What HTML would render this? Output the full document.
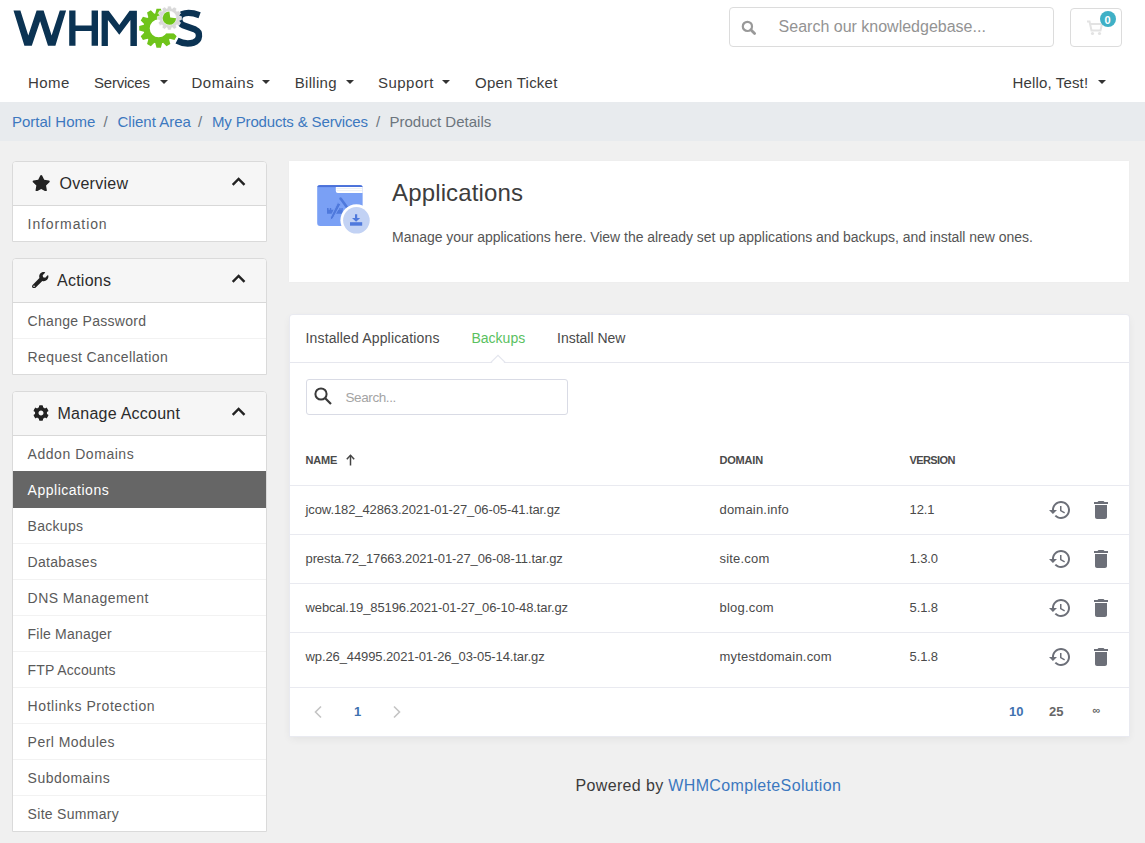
<!DOCTYPE html>
<html><head><meta charset="utf-8">
<style>
*{box-sizing:border-box;margin:0;padding:0}
html,body{width:1145px;height:843px;overflow:hidden}
body{position:relative;background:#f0f0f0;font-family:"Liberation Sans",sans-serif;color:#333}
.a{position:absolute}
.t{position:absolute;line-height:1;white-space:nowrap}
#hdr{position:absolute;left:0;top:0;width:1145px;height:102px;background:#fff}
#bc{position:absolute;left:0;top:102px;width:1145px;height:39px;background:#e8ebee}
.nav{font-size:15px;color:#3b3b3b;top:75.3px}
.caret{position:absolute;width:0;height:0;border-left:4.2px solid transparent;border-right:4.2px solid transparent;border-top:4.6px solid #333;top:80.3px}
.bcl{font-size:15px;color:#3c78bf;top:114.1px}
.panel{position:absolute;left:12px;width:255px;background:#fff;border:1px solid #dadada;border-radius:4px 4px 0 0;overflow:hidden}
.ph{position:relative;height:44px;background:#f6f6f6;border-bottom:1px solid #d8d8d8}
.ph .pt{position:absolute;left:45px;top:14.1px;font-size:16px;line-height:1;color:#2b2b2b;letter-spacing:0.25px}
.ph .ic{position:absolute;left:20px;top:13px}
.chev{position:absolute;left:217px;top:14px}
.li{position:relative;height:36px;border-top:1px solid #f2f2f2;font-size:14px;color:#5a5a5a;letter-spacing:0.4px}
.ph+.li{border-top:0;height:35px}
.li span{position:absolute;left:14.6px;top:11px;line-height:1}
.li.act{background:#666;color:#fff;border-top-color:#666;box-shadow:0 1px 0 #666;z-index:1}
.card{position:absolute;background:#fff}
.th{top:455.3px;font-size:11px;font-weight:bold;color:#4a4a4a;letter-spacing:-0.2px}
.td{font-size:13px;color:#4a4a4a;letter-spacing:-0.1px;margin-top:1px}
.rowline{left:290px;width:839px;height:1px;background:#e9eaf0}
</style></head><body>

<div id="hdr">
  <!-- logo -->
  <svg class="a" style="left:0;top:0" width="220" height="56" viewBox="0 0 220 56">
    <g fill="#0b3353">
      <path d="M13.5 10.4H20.4L28.3 35.6L36.6 10.4H43.6L51.6 35.6L59.8 10.4H66.1L55.4 45.8H48L40.1 21.2L31.8 45.8H24.4Z"/>
      <path d="M69.2 10.4H75.5V25.4H91.6V10.4H98V45.8H91.6V31.1H75.5V45.8H69.2Z"/>
      <path d="M101.6 45.9V10.7H108.7L119.3 25L129.6 10.7H136.9V45.9H130.4V20.1L119.3 34.7L107.9 20.1V45.9Z"/>
    </g>
    <path fill="#6fc41a" fill-rule="evenodd" d="M173.50 24.83 L178.18 26.10 L178.18 30.50 L173.50 31.77 L173.44 32.00 L173.38 32.23 L173.32 32.47 L173.25 32.70 L176.66 36.14 L174.47 39.94 L169.78 38.70 L169.62 38.88 L169.45 39.05 L169.28 39.22 L169.10 39.38 L170.34 44.07 L166.54 46.26 L163.10 42.85 L162.87 42.92 L162.63 42.98 L162.40 43.04 L162.17 43.10 L160.90 47.78 L156.50 47.78 L155.23 43.10 L155.00 43.04 L154.77 42.98 L154.53 42.92 L154.30 42.85 L150.86 46.26 L147.06 44.07 L148.30 39.38 L148.12 39.22 L147.95 39.05 L147.78 38.88 L147.62 38.70 L142.93 39.94 L140.74 36.14 L144.15 32.70 L144.08 32.47 L144.02 32.23 L143.96 32.00 L143.90 31.77 L139.22 30.50 L139.22 26.10 L143.90 24.83 L143.96 24.60 L144.02 24.37 L144.08 24.13 L144.15 23.90 L140.74 20.46 L142.93 16.66 L147.62 17.90 L147.78 17.72 L147.95 17.55 L148.12 17.38 L148.30 17.22 L147.06 12.53 L150.86 10.34 L154.30 13.75 L154.53 13.68 L154.77 13.62 L155.00 13.56 L155.23 13.50 L156.50 8.82 L160.90 8.82 L162.17 13.50 L162.40 13.56 L162.63 13.62 L162.87 13.68 L163.10 13.75 L166.54 10.34 L170.34 12.53 L169.10 17.22 L169.28 17.38 L169.45 17.55 L169.62 17.72 L169.78 17.90 L174.47 16.66 L176.66 20.46 L173.25 23.90 L173.32 24.13 L173.38 24.37 L173.44 24.60ZM149.70 28.30A9.0 9.0 0 1 0 167.70 28.30A9.0 9.0 0 1 0 149.70 28.30Z"/>
    <path fill="#fff" d="M163 0H190V33.4H163Z"/>
    <path d="M199.6 15.2C193 12.8 186 12.4 182.3 14.2C177.8 16.5 178.3 23 183.3 25.3L195.2 29.6C200.8 32 200.2 40.6 193.6 42.6C188 44.2 181.5 43 177 40.6" fill="none" stroke="#0b3353" stroke-width="6.4"/>
    <path fill="#d9d9d9" fill-rule="evenodd" stroke="#fff" stroke-width="0.6" d="M179.03 15.82 L181.41 16.60 L181.41 19.60 L179.03 20.38 L179.00 20.52 L178.96 20.66 L178.92 20.80 L178.88 20.94 L180.55 22.81 L179.05 25.40 L176.60 24.89 L176.50 25.00 L176.40 25.10 L176.30 25.20 L176.19 25.30 L176.70 27.75 L174.11 29.25 L172.24 27.58 L172.10 27.62 L171.96 27.66 L171.82 27.70 L171.68 27.73 L170.90 30.11 L167.90 30.11 L167.12 27.73 L166.98 27.70 L166.84 27.66 L166.70 27.62 L166.56 27.58 L164.69 29.25 L162.10 27.75 L162.61 25.30 L162.50 25.20 L162.40 25.10 L162.30 25.00 L162.20 24.89 L159.75 25.40 L158.25 22.81 L159.92 20.94 L159.88 20.80 L159.84 20.66 L159.80 20.52 L159.77 20.38 L157.39 19.60 L157.39 16.60 L159.77 15.82 L159.80 15.68 L159.84 15.54 L159.88 15.40 L159.92 15.26 L158.25 13.39 L159.75 10.80 L162.20 11.31 L162.30 11.20 L162.40 11.10 L162.50 11.00 L162.61 10.90 L162.10 8.45 L164.69 6.95 L166.56 8.62 L166.70 8.58 L166.84 8.54 L166.98 8.50 L167.12 8.47 L167.90 6.09 L170.90 6.09 L171.68 8.47 L171.82 8.50 L171.96 8.54 L172.10 8.58 L172.24 8.62 L174.11 6.95 L176.70 8.45 L176.19 10.90 L176.30 11.00 L176.40 11.10 L176.50 11.20 L176.60 11.31 L179.05 10.80 L180.55 13.39 L178.88 15.26 L178.92 15.40 L178.96 15.54 L179.00 15.68ZM162.60 18.10A6.8 6.8 0 1 0 176.20 18.10A6.8 6.8 0 1 0 162.60 18.10Z"/>
    <path fill="#6fc41a" d="M170.2 17.4L169.4 11.4A6.7 6.7 0 1 0 176.1 18.3Z"/>
    </svg>

  <!-- search -->
  <div class="a" style="left:729px;top:7px;width:325px;height:40px;border:1px solid #dcdcdc;border-radius:4px;background:#fff"></div>
  <svg class="a" style="left:741px;top:20px" width="16" height="16" viewBox="0 0 16 16"><circle cx="6.4" cy="6.4" r="4.6" fill="none" stroke="#999" stroke-width="2.2"/><path d="M9.8 9.8L13.6 13.6" stroke="#999" stroke-width="2.8" stroke-linecap="round"/></svg>
  <div class="t" style="left:778.6px;top:19.4px;font-size:16px;color:#939393">Search our knowledgebase...</div>

  <!-- cart -->
  <div class="a" style="left:1070px;top:8px;width:52px;height:39px;border:1px solid #dcdcdc;border-radius:4px;background:#fff"></div>
  <svg class="a" style="left:1086px;top:20px" width="18" height="16" viewBox="0 0 18 16"><path d="M1 1.5H3.5L5.5 10.5H14.5L16 4H4.5" fill="none" stroke="#e3e3e3" stroke-width="2"/><circle cx="6.5" cy="13.5" r="1.6" fill="#e3e3e3"/><circle cx="13.5" cy="13.5" r="1.6" fill="#e3e3e3"/></svg>
  <div class="a" style="left:1099.6px;top:11.4px;width:16px;height:16px;border-radius:50%;background:#3fb0c6"></div>
  <div class="t" style="left:1099.6px;top:14.5px;width:16px;text-align:center;font-size:11px;font-weight:bold;color:#fff">0</div>

  <!-- nav -->
  <div class="t nav" style="left:28px;letter-spacing:0.43px">Home</div>
  <div class="t nav" style="left:94px;letter-spacing:-0.23px">Services</div><div class="caret" style="left:159.8px"></div>
  <div class="t nav" style="left:191.5px;letter-spacing:0.5px">Domains</div><div class="caret" style="left:262.4px"></div>
  <div class="t nav" style="left:294.8px;letter-spacing:0.28px">Billing</div><div class="caret" style="left:346px"></div>
  <div class="t nav" style="left:378px;letter-spacing:0.47px">Support</div><div class="caret" style="left:442.3px"></div>
  <div class="t nav" style="left:475px;letter-spacing:0.23px">Open Ticket</div>
  <div class="t nav" style="left:1012.5px;letter-spacing:0.15px">Hello, Test!</div><div class="caret" style="left:1097.5px"></div>
</div>

<div id="bc"></div>
<div class="t bcl" style="left:12px">Portal Home</div>
<div class="t bcl" style="left:103.5px;color:#6c757d">/</div>
<div class="t bcl" style="left:117.5px">Client Area</div>
<div class="t bcl" style="left:198px;color:#6c757d">/</div>
<div class="t bcl" style="left:212px;letter-spacing:-0.15px">My Products &amp; Services</div>
<div class="t bcl" style="left:376px;color:#6c757d">/</div>
<div class="t bcl" style="left:389.5px;color:#6c757d">Product Details</div>

<!-- sidebar -->
<div class="panel" style="top:161px;height:81px">
  <div class="ph">
    <svg class="ic" style="left:19.2px;top:12.7px" width="18.4" height="16.36" viewBox="0 0 576 512"><path fill="#222" d="M259.3 17.8L194 150.2 47.9 171.5c-26.2 3.8-36.7 36.1-17.7 54.6l105.7 103-25 145.5c-4.5 26.3 23.2 46 46.4 33.7L288 439.6l130.7 68.7c23.2 12.2 50.9-7.4 46.4-33.7l-25-145.5 105.7-103c19-18.5 8.5-50.8-17.7-54.6L382 150.2 316.7 17.8c-11.7-23.6-45.6-23.9-57.4 0z"/></svg>
    <div class="pt" style="left:46.5px">Overview</div>
    <svg class="chev" width="18" height="12" viewBox="0 0 18 12"><path d="M2.7 8.8L8.6 2.9L14.5 8.8" fill="none" stroke="#222" stroke-width="2.4"/></svg>
  </div>
  <div class="li"><span style="letter-spacing:0.9px">Information</span></div>
</div>

<div class="panel" style="top:258px;height:117px">
  <div class="ph">
    <svg class="ic" style="left:19.3px;top:12.6px" width="16.4" height="16.4" viewBox="0 0 512 512"><path fill="#222" d="M507.73 109.1c-2.24-9.03-13.54-12.09-20.12-5.51l-74.36 74.36-67.88-11.31-11.31-67.88 74.36-74.36c6.62-6.62 3.43-17.9-5.66-20.16-47.38-11.74-99.55.91-136.58 37.93-39.64 39.64-50.55 97.1-34.05 147.2L18.74 402.76c-24.99 24.99-24.99 65.51 0 90.5 24.99 24.99 65.51 24.99 90.5 0l213.21-213.21c50.12 16.71 107.47 5.68 147.37-34.22 37.07-37.07 49.7-89.32 37.91-136.73zM64 472c-13.25 0-24-10.75-24-24 0-13.26 10.75-24 24-24s24 10.74 24 24c0 13.25-10.75 24-24 24z"/></svg>
    <div class="pt" style="left:44px">Actions</div>
    <svg class="chev" width="18" height="12" viewBox="0 0 18 12"><path d="M2.7 8.8L8.6 2.9L14.5 8.8" fill="none" stroke="#222" stroke-width="2.4"/></svg>
  </div>
  <div class="li"><span style="letter-spacing:0.29px">Change Password</span></div>
  <div class="li"><span style="letter-spacing:0.37px">Request Cancellation</span></div>
</div>

<div class="panel" style="top:391px;height:441px">
  <div class="ph">
    <svg class="ic" style="left:19.7px;top:13px" width="16" height="16" viewBox="0 0 512 512"><path fill="#222" d="M487.4 315.7l-42.6-24.6c4.3-23.2 4.3-47 0-70.2l42.6-24.6c4.9-2.8 7.1-8.6 5.5-14-11.1-35.6-30-67.8-54.7-94.6-3.8-4.1-10-5.1-14.8-2.3L380.8 110c-17.9-15.4-38.5-27.3-60.8-35.1V25.8c0-5.6-3.9-10.5-9.4-11.7-36.7-8.2-74.3-7.8-109.2 0-5.5 1.2-9.4 6.1-9.4 11.7V75c-22.2 7.9-42.8 19.8-60.8 35.1L88.7 85.5c-4.9-2.8-11-1.9-14.8 2.3-24.7 26.7-43.6 58.9-54.7 94.6-1.7 5.4.6 11.2 5.5 14L67.3 221c-4.3 23.2-4.3 47 0 70.2l-42.6 24.6c-4.9 2.8-7.1 8.6-5.5 14 11.1 35.6 30 67.8 54.7 94.6 3.8 4.1 10 5.1 14.8 2.3l42.6-24.6c17.9 15.4 38.5 27.3 60.8 35.1v49.2c0 5.6 3.9 10.5 9.4 11.7 36.7 8.2 74.3 7.8 109.2 0 5.5-1.2 9.4-6.1 9.4-11.7v-49.2c22.2-7.9 42.8-19.8 60.8-35.1l42.6 24.6c4.9 2.8 11 1.9 14.8-2.3 24.7-26.7 43.6-58.9 54.7-94.6 1.5-5.5-.7-11.3-5.6-14.1zM256 336c-44.1 0-80-35.9-80-80s35.9-80 80-80 80 35.9 80 80-35.9 80-80 80z"/></svg>
    <div class="pt" style="left:44.5px">Manage Account</div>
    <svg class="chev" width="18" height="12" viewBox="0 0 18 12"><path d="M2.7 8.8L8.6 2.9L14.5 8.8" fill="none" stroke="#222" stroke-width="2.4"/></svg>
  </div>
  <div class="li"><span style="letter-spacing:0.54px">Addon Domains</span></div>
  <div class="li act"><span style="letter-spacing:0.51px">Applications</span></div>
  <div class="li"><span style="letter-spacing:0.28px">Backups</span></div>
  <div class="li"><span style="letter-spacing:0.3px">Databases</span></div>
  <div class="li"><span style="letter-spacing:0.43px">DNS Management</span></div>
  <div class="li"><span style="letter-spacing:0.21px">File Manager</span></div>
  <div class="li"><span style="letter-spacing:0.1px">FTP Accounts</span></div>
  <div class="li"><span style="letter-spacing:0.57px">Hotlinks Protection</span></div>
  <div class="li"><span style="letter-spacing:0.47px">Perl Modules</span></div>
  <div class="li"><span style="letter-spacing:0.47px">Subdomains</span></div>
  <div class="li"><span style="letter-spacing:0.3px">Site Summary</span></div>
</div>

<!-- MAIN -->

<!-- card 1 -->
<div class="card" style="left:289px;top:161px;width:840px;height:121px;box-shadow:0 0 2px rgba(0,0,0,0.03)"></div>
<svg class="a" style="left:314px;top:182px" width="60" height="56" viewBox="0 0 60 56">
  <defs><clipPath id="fc"><rect x="3.1" y="3.1" width="45.7" height="40.9" rx="3"/></clipPath></defs>
  <g clip-path="url(#fc)">
    <rect x="3.1" y="3.1" width="45.7" height="40.9" fill="#7aa0f5"/>
    <rect x="3.1" y="3.1" width="45.7" height="2" fill="#4b71d9"/>
    <path d="M21.8 5H48.8V11.1H23.8Q21.8 11.1 21.8 9.1Z" fill="#fff"/>
    <rect x="22.5" y="6.1" width="26" height="0.6" fill="#dfe4ee"/>
    <rect x="22.5" y="8.5" width="26" height="0.6" fill="#dfe4ee"/>
  </g>
  <path d="M13 27.7H28.7V31.7H13Z M13 26H14.6V28H13Z M15.8 26H17.2V28H15.8Z M25.3 26H26.6V28H25.3Z M27.4 26H28.7V28H27.4Z" fill="#4f79dc"/>
  <path d="M26.6 16.5L32.8 25" stroke="#4f79dc" stroke-width="2.6" stroke-linecap="round"/>
  <path d="M23.6 20.6L26.9 22L19 36.6L16.2 38.2L16.5 35.2Z" fill="#4f79dc" stroke="#7aa0f5" stroke-width="1"/>
  <circle cx="42.4" cy="38.3" r="16" fill="#fff"/>
  <circle cx="42.4" cy="38.3" r="13.3" fill="#c2d2f4"/>
  <path d="M41 32.2H43.2V36H46.2L42.1 39.8L38 36H41Z" fill="#4f79dc"/>
  <path d="M36 40.2H48.2V43.7H36Z" fill="#4f79dc"/>
</svg>
<div class="t" style="left:392px;top:180.6px;font-size:24px;color:#3d3d3d;letter-spacing:0.15px">Applications</div>
<div class="t" style="left:392px;top:230.1px;font-size:14px;color:#555;letter-spacing:-0.033px">Manage your applications here. View the already set up applications and backups, and install new ones.</div>

<!-- card 2 -->
<div class="card" style="left:290px;top:315px;width:839px;height:421px;border-radius:3px 3px 0 0;box-shadow:0 0 0 1px #e9eaf0, 0 3px 8px rgba(0,0,0,0.06)"></div>
<div class="t" style="left:305.5px;top:331px;font-size:14px;color:#4a4a4a;letter-spacing:0.15px">Installed Applications</div>
<div class="t" style="left:471.5px;top:331px;font-size:14px;color:#5ac15f">Backups</div>
<div class="t" style="left:557px;top:331px;font-size:14px;color:#4a4a4a">Install New</div>
<div class="a" style="left:290px;top:362px;width:839px;height:1px;background:#e6e7ee"></div>
<svg class="a" style="left:489px;top:353px" width="18" height="12" viewBox="0 0 18 12"><path d="M2.6 10H15.4L9 3.6Z" fill="#fff"/><path d="M1.6 9.6L9 2.4L16.4 9.6" fill="none" stroke="#e4e6ee" stroke-width="1.3"/></svg>
<div class="a" style="left:306px;top:379px;width:262px;height:36px;border:1px solid #d9dbe5;border-radius:3px"></div>
<svg class="a" style="left:313px;top:385.5px" width="20" height="20" viewBox="0 0 20 20"><circle cx="8" cy="8" r="5.6" fill="none" stroke="#3a3a3a" stroke-width="2"/><path d="M12 12L18 18" stroke="#3a3a3a" stroke-width="2.2"/></svg>
<div class="t" style="left:345.5px;top:390.7px;font-size:13.5px;color:#a4a4a4;letter-spacing:-0.4px">Search...</div>

<div class="t th" style="left:305.5px">NAME</div>
<svg class="a" style="left:345px;top:453px" width="11" height="13" viewBox="0 0 11 13"><path d="M5.5 2.5V12.5" stroke="#444" stroke-width="1.5"/><path d="M1.8 6.2L5.5 2.3L9.2 6.2" fill="none" stroke="#444" stroke-width="1.5"/></svg>
<div class="t th" style="left:719.5px">DOMAIN</div>
<div class="t th" style="left:909.5px;letter-spacing:-0.6px">VERSION</div>
<div class="a rowline" style="top:485px"></div>
<div class="t td" style="left:305.5px;top:502.45px">jcow.182_42863.2021-01-27_06-05-41.tar.gz</div><div class="t td" style="left:719.5px;letter-spacing:0.2px;top:502.45px">domain.info</div><div class="t td" style="left:909.5px;top:502.45px">12.1</div>
<svg class="a" style="left:1047.5px;top:498px" width="24" height="24" viewBox="0 0 24 24"><path fill="#6c6f78" d="M13 3c-4.97 0-9 4.03-9 9H1l3.89 3.89.07.14L9 12H6c0-3.87 3.13-7 7-7s7 3.13 7 7-3.13 7-7 7c-1.93 0-3.68-.79-4.94-2.06l-1.42 1.42C8.27 19.99 10.51 21 13 21c4.97 0 9-4.03 9-9s-4.03-9-9-9zm-1 5v5l4.28 2.54.72-1.21-3.5-2.08V8H12z"/></svg><svg class="a" style="left:1088.6px;top:498px" width="24" height="24" viewBox="0 0 24 24"><path fill="#6c6f78" d="M6 19c0 1.1.9 2 2 2h8c1.1 0 2-.9 2-2V7H6v12zM19 4h-3.5l-1-1h-5l-1 1H5v2h14V4z"/></svg>
<div class="a rowline" style="top:534px"></div>
<div class="t td" style="left:305.5px;top:551.45px">presta.72_17663.2021-01-27_06-08-11.tar.gz</div><div class="t td" style="left:719.5px;letter-spacing:0.2px;top:551.45px">site.com</div><div class="t td" style="left:909.5px;top:551.45px">1.3.0</div>
<svg class="a" style="left:1047.5px;top:547px" width="24" height="24" viewBox="0 0 24 24"><path fill="#6c6f78" d="M13 3c-4.97 0-9 4.03-9 9H1l3.89 3.89.07.14L9 12H6c0-3.87 3.13-7 7-7s7 3.13 7 7-3.13 7-7 7c-1.93 0-3.68-.79-4.94-2.06l-1.42 1.42C8.27 19.99 10.51 21 13 21c4.97 0 9-4.03 9-9s-4.03-9-9-9zm-1 5v5l4.28 2.54.72-1.21-3.5-2.08V8H12z"/></svg><svg class="a" style="left:1088.6px;top:547px" width="24" height="24" viewBox="0 0 24 24"><path fill="#6c6f78" d="M6 19c0 1.1.9 2 2 2h8c1.1 0 2-.9 2-2V7H6v12zM19 4h-3.5l-1-1h-5l-1 1H5v2h14V4z"/></svg>
<div class="a rowline" style="top:583px"></div>
<div class="t td" style="left:305.5px;top:600.45px">webcal.19_85196.2021-01-27_06-10-48.tar.gz</div><div class="t td" style="left:719.5px;letter-spacing:0.2px;top:600.45px">blog.com</div><div class="t td" style="left:909.5px;top:600.45px">5.1.8</div>
<svg class="a" style="left:1047.5px;top:596px" width="24" height="24" viewBox="0 0 24 24"><path fill="#6c6f78" d="M13 3c-4.97 0-9 4.03-9 9H1l3.89 3.89.07.14L9 12H6c0-3.87 3.13-7 7-7s7 3.13 7 7-3.13 7-7 7c-1.93 0-3.68-.79-4.94-2.06l-1.42 1.42C8.27 19.99 10.51 21 13 21c4.97 0 9-4.03 9-9s-4.03-9-9-9zm-1 5v5l4.28 2.54.72-1.21-3.5-2.08V8H12z"/></svg><svg class="a" style="left:1088.6px;top:596px" width="24" height="24" viewBox="0 0 24 24"><path fill="#6c6f78" d="M6 19c0 1.1.9 2 2 2h8c1.1 0 2-.9 2-2V7H6v12zM19 4h-3.5l-1-1h-5l-1 1H5v2h14V4z"/></svg>
<div class="a rowline" style="top:632px"></div>
<div class="t td" style="left:305.5px;top:649.45px">wp.26_44995.2021-01-26_03-05-14.tar.gz</div><div class="t td" style="left:719.5px;letter-spacing:0.2px;top:649.45px">mytestdomain.com</div><div class="t td" style="left:909.5px;top:649.45px">5.1.8</div>
<svg class="a" style="left:1047.5px;top:645px" width="24" height="24" viewBox="0 0 24 24"><path fill="#6c6f78" d="M13 3c-4.97 0-9 4.03-9 9H1l3.89 3.89.07.14L9 12H6c0-3.87 3.13-7 7-7s7 3.13 7 7-3.13 7-7 7c-1.93 0-3.68-.79-4.94-2.06l-1.42 1.42C8.27 19.99 10.51 21 13 21c4.97 0 9-4.03 9-9s-4.03-9-9-9zm-1 5v5l4.28 2.54.72-1.21-3.5-2.08V8H12z"/></svg><svg class="a" style="left:1088.6px;top:645px" width="24" height="24" viewBox="0 0 24 24"><path fill="#6c6f78" d="M6 19c0 1.1.9 2 2 2h8c1.1 0 2-.9 2-2V7H6v12zM19 4h-3.5l-1-1h-5l-1 1H5v2h14V4z"/></svg>
<div class="a rowline" style="top:687px"></div>

<svg class="a" style="left:312px;top:705px" width="12" height="14" viewBox="0 0 12 14"><path d="M9 1.5L3.5 7L9 12.5" fill="none" stroke="#c4c4c4" stroke-width="1.6"/></svg>
<div class="t" style="left:354px;top:705px;font-size:13px;font-weight:bold;color:#3f72b0">1</div>
<svg class="a" style="left:391px;top:705px" width="12" height="14" viewBox="0 0 12 14"><path d="M3 1.5L8.5 7L3 12.5" fill="none" stroke="#c4c4c4" stroke-width="1.6"/></svg>
<div class="t" style="left:1009px;top:705px;font-size:13px;font-weight:bold;color:#3f72b0">10</div>
<div class="t" style="left:1049px;top:705px;font-size:13px;font-weight:bold;color:#666">25</div>
<div class="t" style="left:1092.5px;top:705px;font-size:11px;font-weight:bold;color:#666">&#8734;</div>

<div class="t" style="left:575.5px;top:778.4px;font-size:16px;color:#3b3b3b;letter-spacing:0.35px">Powered by <span style="color:#3c78bf">WHMCompleteSolution</span></div>


</body></html>
